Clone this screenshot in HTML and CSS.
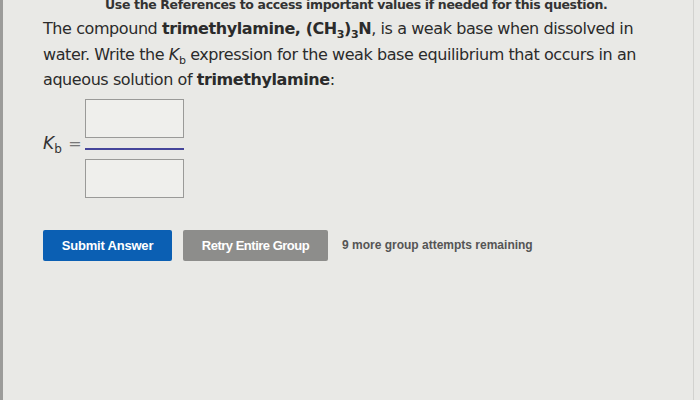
FILE: index.html
```html
<!DOCTYPE html>
<html lang="en">
<head>
  <meta charset="UTF-8">
  <title>Kb expression</title>
  <link rel="stylesheet" href="styles.css">
</head>
<body>
  <div class="frame">
    <div class="notice">Use the References to access important values if needed for this question.</div>

    <p class="question">
      The compound <b>trimethylamine, (CH<sub>3</sub>)<sub>3</sub>N</b>, is a weak base when dissolved in
      water. Write the <i>K</i><sub>b</sub> expression for the weak base equilibrium that occurs in an
      aqueous solution of <b>trimethylamine</b>:
    </p>

    <div class="answer">
      <div class="kb"><i>K</i><sub>b</sub> <span class="eq">=</span></div>
      <div class="fraction">
        <div class="slot"></div>
        <div class="bar"></div>
        <div class="slot"></div>
      </div>
    </div>

    <div class="actions">
      <button class="btn submit">Submit Answer</button>
      <button class="btn retry">Retry Entire Group</button>
      <span class="remaining">9 more group attempts remaining</span>
    </div>
  </div>
</body>
</html>
```

FILE: styles.css
```css
body {
  margin: 0;
  background: #e9e9e6;
  font-family: "DejaVu Sans", Verdana, sans-serif;
  color: #2b2b2b;
}
.frame {
  height: 400px;
  box-sizing: border-box;
  border-left: 3px solid #9c9c9a;
  border-right: 1px solid #d2d2cf;
  margin-right: 6px;
  padding-left: 40px;
  overflow: hidden;
}
.notice {
  font-weight: bold;
  font-size: 12.5px;
  letter-spacing: -0.35px;
  line-height: 14px;
  margin-top: -2px;
  padding-left: 62px;
  color: #333;
  white-space: nowrap;
}
.question {
  margin: 4px 0 0;
  font-size: 16px;
  letter-spacing: -0.42px;
  line-height: 25.5px;
  width: 620px;
}
.question sub {
  font-size: 11px;
  line-height: 0;
}
.answer {
  display: flex;
  align-items: center;
  margin-top: 6px;
}
.kb {
  font-size: 17px;
  width: 42px;
  margin-bottom: 6px;
  color: #333;
}
.kb sub { font-size: 12px; }
.kb .eq {
  font-size: 16px;
  color: #777;
  margin-left: 1px;
}
.fraction {
  display: flex;
  flex-direction: column;
  width: 99px;
}
.slot {
  height: 37px;
  border: 1px solid #9a9a98;
  background: #efefec;
}
.bar {
  height: 2px;
  background: #45459a;
  margin: 10px 0 9px;
}
.actions {
  display: flex;
  align-items: center;
  margin-top: 32px;
  gap: 11px;
}
.btn {
  font-family: "Liberation Sans", Arial, sans-serif;
  font-weight: bold;
  font-size: 13px;
  letter-spacing: -0.2px;
  color: #fff;
  border: none;
  border-radius: 2px;
  height: 31px;
  cursor: pointer;
}
.submit {
  background: #0b5fb3;
  width: 129px;
}
.retry {
  background: #8d8d8b;
  width: 145px;
  letter-spacing: -0.5px;
}
.remaining {
  font-family: "Liberation Sans", Arial, sans-serif;
  font-weight: bold;
  font-size: 12px;
  color: #555;
  margin-left: 3px;
}
```
